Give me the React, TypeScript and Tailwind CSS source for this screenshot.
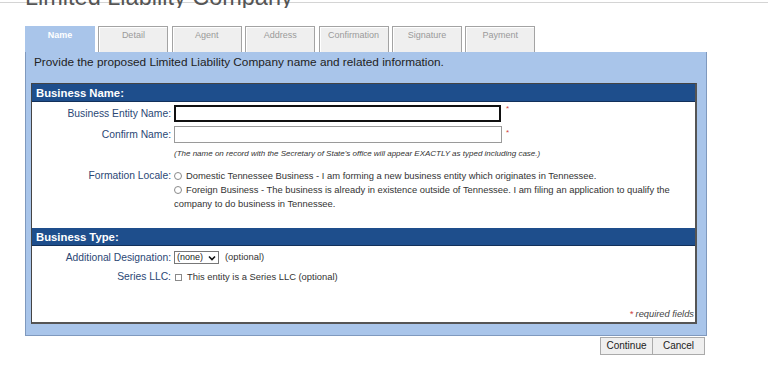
import React from "react";

const tabs = ["Name", "Detail", "Agent", "Address", "Confirmation", "Signature", "Payment"];

function Radio() {
  return (
    <span className="inline-block w-[8px] h-[8px] rounded-full border border-[#8a8a8a] bg-white align-[-1px] mr-[4px]" />
  );
}

const label = "text-right text-[10.3px] text-[#2b4775]";

export default function App() {
  return (
    <div className="w-[768px] h-[366px] bg-white overflow-hidden font-['Liberation_Sans',Arial,sans-serif] text-[#222]">
      {/* cropped title */}
      <div className="relative h-[8px] overflow-hidden">
        <div className="h-[3px] border-b border-[#d4d4d4]" />
        <div className="absolute left-[25px] top-[-15px] text-[23.5px] leading-[24px] text-[#555]">
          Limited Liability Company
        </div>
      </div>

      <div className="ml-[25px] w-[682px] mt-[18px]">
        {/* tabs */}
        <div className="flex gap-[3.4px] h-[26px]">
          {tabs.map((t, i) =>
            i === 0 ? (
              <div
                key={t}
                className="w-[70px] h-[26px] bg-[#a9c5ea] text-white font-bold text-[9px] text-center pt-[4px] leading-[11px]"
              >
                {t}
              </div>
            ) : (
              <div
                key={t}
                className="w-[70px] h-[26px] bg-[#efefef] border border-b-0 border-[#a3a3a3] shadow-[inset_1px_1px_0_#ffffff] text-[#9a9a9a] text-[9px] text-center pt-[3px] leading-[11px]"
              >
                {t}
              </div>
            )
          )}
        </div>

        {/* panel */}
        <div className="bg-[#a9c5ea] border border-t-0 border-[#7f99be] pt-[3px] pb-[11px]">
          <div className="pl-[8px] text-[11.8px] leading-[14px] text-[#222]">
            Provide the proposed Limited Liability Company name and related information.
          </div>

          <div className="mt-[14px] ml-[5px] w-[666px] bg-white border border-[#444] border-r-2 border-b-2 border-r-[#555] border-b-[#555]">
            <div className="h-[18px] bg-[#1e4e8c] border-b border-[#12305a] text-white font-bold text-[11.3px] leading-[18px] pl-[4px]">
              Business Name:
            </div>

            <div className="flex items-center mt-[3px] h-[17px]">
              <div className={`w-[139px] ${label}`}>Business Entity Name:</div>
              <div className="ml-[3px] w-[327px] h-[17px] border-2 border-[#111] bg-white" />
              <div className="self-start ml-[5px] text-[8px] leading-[8px] text-[#d04040]">*</div>
            </div>

            <div className="flex items-center mt-[4px] h-[17px]">
              <div className={`w-[139px] ${label}`}>Confirm Name:</div>
              <div className="ml-[3px] w-[328px] h-[17px] border border-[#9a9a9a] bg-white" />
              <div className="self-start ml-[4px] mt-[3px] text-[8px] leading-[8px] text-[#d04040]">*</div>
            </div>

            <div className="mt-[6px] ml-[142px] text-[8px] leading-[10px] italic text-[#333]">
              (The name on record with the Secretary of State's office will appear EXACTLY as typed including case.)
            </div>

            <div className="flex mt-[10px]">
              <div className={`w-[139px] shrink-0 leading-[14px] ${label}`}>Formation Locale:</div>
              <div className="ml-[3px] w-[515px] text-[9.4px] leading-[14px] text-[#333]">
                <div>
                  <Radio />
                  Domestic Tennessee Business - I am forming a new business entity which originates in Tennessee.
                </div>
                <div>
                  <Radio />
                  Foreign Business - The business is already in existence outside of Tennessee. I am filing an application to qualify the company to do business in Tennessee.
                </div>
              </div>
            </div>

            <div className="mt-[17px] h-[18px] bg-[#1e4e8c] border-b border-[#12305a] text-white font-bold text-[11.3px] leading-[18px] pl-[4px]">
              Business Type:
            </div>

            <div className="flex items-center mt-[5px] h-[13px]">
              <div className={`w-[139px] ${label}`}>Additional Designation:</div>
              <div className="ml-[3px] w-[45px] h-[13px] border border-[#777] flex items-center justify-between px-[2px] text-[9px] leading-[11px] text-[#222]">
                <span>(none)</span>
                <svg width="8" height="6" viewBox="0 0 8 6">
                  <path d="M1 1.5 L4 4.5 L7 1.5" fill="none" stroke="#111" strokeWidth="1.6" />
                </svg>
              </div>
              <div className="ml-[6px] text-[9.4px] text-[#333]">(optional)</div>
            </div>

            <div className="flex items-center mt-[6px] h-[14px]">
              <div className={`w-[139px] ${label}`}>Series LLC:</div>
              <span className="ml-[4px] inline-block w-[7px] h-[7px] border border-[#8a8a8a] bg-white" />
              <div className="ml-[5px] text-[9.4px] text-[#333]">This entity is a Series LLC (optional)</div>
            </div>

            <div className="mt-[24px] pb-[2px] text-right pr-[1px] text-[9.3px] leading-[12px] italic text-[#444]">
              <span className="text-[#d04040]">*</span> required fields
            </div>
          </div>
        </div>

        {/* buttons */}
        <div className="flex justify-end pr-[2px] mt-[1px]">
          <button className="w-[53px] h-[18px] bg-[#efefef] border border-[#aaa] text-[10px] leading-[16px] text-[#222]">
            Continue
          </button>
          <button className="w-[52px] h-[18px] bg-[#efefef] border border-l-0 border-[#aaa] text-[10px] leading-[16px] text-[#222]">
            Cancel
          </button>
        </div>
      </div>
    </div>
  );
}
